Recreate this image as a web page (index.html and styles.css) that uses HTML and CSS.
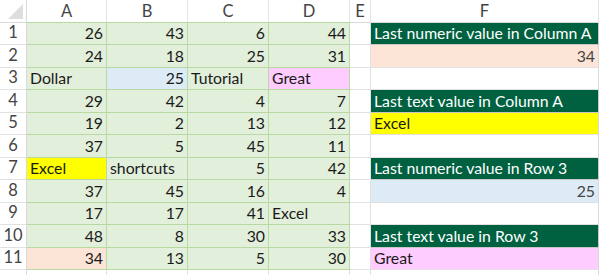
FILE: index.html
```html
<!DOCTYPE html>
<html lang="en">
<head>
<meta charset="utf-8">
<title>Sheet</title>
<link rel="stylesheet" href="styles.css">
</head>
<body>
<div class="sheet">
  <div class="corner"><span class="tri"></span></div>
  <div class="ch ch-g">A</div><div class="ch ch-g">B</div><div class="ch ch-g">C</div><div class="ch ch-g">D</div><div class="ch">E</div><div class="ch">F</div>

  <div class="rh">1</div>
  <div class="c g n">26</div><div class="c g n">43</div><div class="c g n">6</div><div class="c g n">44</div><div class="c e"></div><div class="c f hd">Last numeric value in Column A</div>

  <div class="rh">2</div>
  <div class="c g n">24</div><div class="c g n">18</div><div class="c g n">25</div><div class="c g n">31</div><div class="c e"></div><div class="c f peach n">34</div>

  <div class="rh">3</div>
  <div class="c g">Dollar</div><div class="c g blue n">25</div><div class="c g">Tutorial</div><div class="c g pink">Great</div><div class="c e"></div><div class="c f"></div>

  <div class="rh">4</div>
  <div class="c g n">29</div><div class="c g n">42</div><div class="c g n">4</div><div class="c g n">7</div><div class="c e"></div><div class="c f hd">Last text value in Column A</div>

  <div class="rh">5</div>
  <div class="c g n">19</div><div class="c g n">2</div><div class="c g n">13</div><div class="c g n">12</div><div class="c e"></div><div class="c f yellow">Excel</div>

  <div class="rh">6</div>
  <div class="c g n">37</div><div class="c g n">5</div><div class="c g n">45</div><div class="c g n">11</div><div class="c e"></div><div class="c f"></div>

  <div class="rh">7</div>
  <div class="c g yellow">Excel</div><div class="c g">shortcuts</div><div class="c g n">5</div><div class="c g n">42</div><div class="c e"></div><div class="c f hd">Last numeric value in Row 3</div>

  <div class="rh">8</div>
  <div class="c g n">37</div><div class="c g n">45</div><div class="c g n">16</div><div class="c g n">4</div><div class="c e"></div><div class="c f blue n">25</div>

  <div class="rh">9</div>
  <div class="c g n">17</div><div class="c g n">17</div><div class="c g n">41</div><div class="c g">Excel</div><div class="c e"></div><div class="c f"></div>

  <div class="rh">10</div>
  <div class="c g n">48</div><div class="c g n">8</div><div class="c g n">30</div><div class="c g n">33</div><div class="c e"></div><div class="c f hd">Last text value in Row 3</div>

  <div class="rh">11</div>
  <div class="c g peach n">34</div><div class="c g n">13</div><div class="c g n">5</div><div class="c g n">30</div><div class="c e"></div><div class="c f pink">Great</div>

  <div class="rh"></div>
  <div class="c w"></div><div class="c w"></div><div class="c w"></div><div class="c w"></div><div class="c e"></div><div class="c f"></div>
</div>
</body>
</html>
```
FILE: styles.css
```css
html, body {
  margin: 0;
  padding: 0;
  background: #ffffff;
  overflow: hidden;
}
.sheet {
  display: grid;
  grid-template-columns: 27px 80px 81px 81px 81px 21px 228px;
  grid-auto-rows: 22.5px;
  font-family: Lato, "Open Sans", sans-serif;
  font-size: 15.8px;
  color: #1a1a1a;
  width: 599px;
}
.corner {
  position: relative;
  border-right: 1px solid #d9d9d9;
  border-bottom: 1px solid #d9d9d9;
  background: #fff;
}
.tri {
  position: absolute;
  right: 3px;
  bottom: 3px;
  width: 0;
  height: 0;
  border-left: 15px solid transparent;
  border-bottom: 15px solid #dedede;
}
.ch {
  display: flex;
  align-items: flex-end;
  justify-content: center;
  padding-bottom: 1px;
  border-right: 1px solid #e4e4e4;
  border-bottom: 1px solid #d9d9d9;
  color: #444;
  font-size: 16.5px;
  background: #fff;
}
.ch-g {
  border-bottom-color: #b9d9a3;
}
.rh {
  display: flex;
  align-items: flex-end;
  justify-content: center;
  padding-bottom: 2px;
  border-right: 1px solid #d9d9d9;
  border-bottom: 1px solid #e1e1e1;
  color: #444;
  font-size: 16.5px;
  background: #fff;
}
.c {
  display: flex;
  align-items: flex-end;
  padding: 0 3px 2px 3px;
  white-space: nowrap;
  overflow: visible;
  border-right: 1px solid #e1e1e1;
  border-bottom: 1px solid #e1e1e1;
  background: #fff;
}
.c.n {
  justify-content: flex-end;
}
.g {
  background: #e2efda;
  border-right-color: #b9d9a3;
  border-bottom-color: #b9d9a3;
}
.e {
  background: #fff;
}
.w {
  background: #fff;
}
.f {
  border-right-color: #d9d9d9;
}
.hd {
  background: #006141;
  color: #ffffff;
  border-bottom-color: #c8c8c8;
  border-right-color: #c8c8c8;
}
.peach {
  background: #fce4d6;
}
.blue {
  background: #ddebf7;
}
.pink {
  background: #ffccff;
}
.yellow {
  background: #ffff00;
}
.f.n {
  color: #444;
}
```
